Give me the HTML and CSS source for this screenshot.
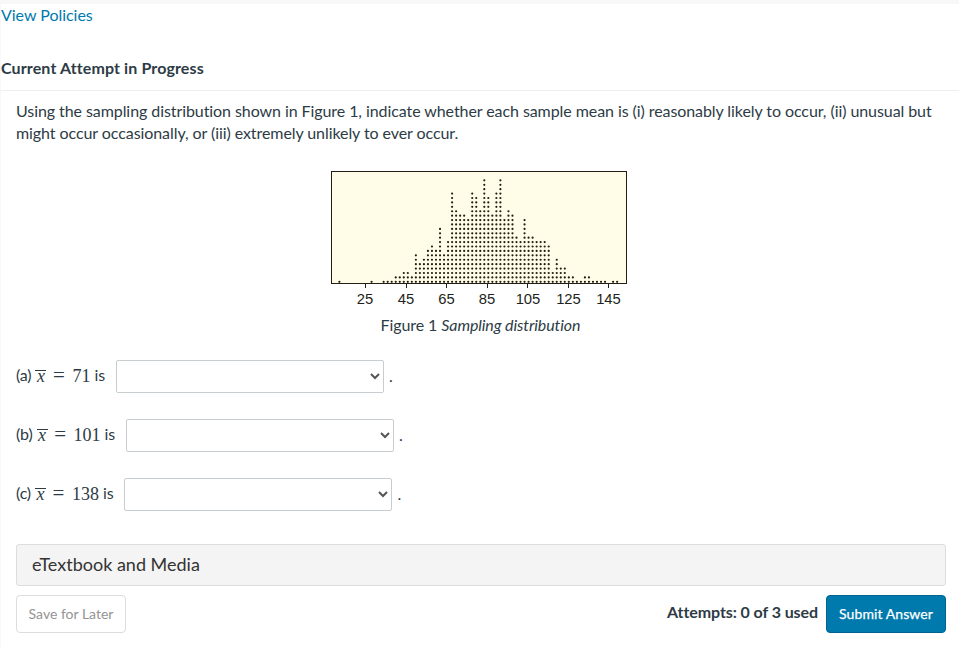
FILE: index.html
```html
<!DOCTYPE html>
<html lang="en">
<head>
<meta charset="utf-8">
<title>Current Attempt in Progress</title>
<link rel="stylesheet" href="styles.css">
</head>
<body>
<main class="page">
  <a class="policies" href="#">View Policies</a>
  <h1 class="heading">Current Attempt in Progress</h1>
  <section class="question">
    <p class="prompt">Using the sampling distribution shown in Figure 1, indicate whether each sample mean is (i) reasonably likely to occur, (ii) unusual but<br>might occur occasionally, or (iii) extremely unlikely to ever occur.</p>
    <figure class="figure">
      <svg class="plot" width="298" height="140" viewBox="330 170 298 140" role="img" aria-label="Sampling distribution dot plot">
        <rect class="frame" x="331.5" y="171.5" width="295" height="112"/>
        <path class="dots" id="dots"/>
        <path class="ticks" d="M365.5 284v4M406.5 284v4M446.5 284v4M487.5 284v4M527.5 284v4M568.5 284v4M608.5 284v4"/>
        <g class="labels">
          <text x="365" y="304">25</text><text x="406" y="304">45</text><text x="446.5" y="304">65</text><text x="487" y="304">85</text><text x="528" y="304">105</text><text x="568.5" y="304">125</text><text x="608.5" y="304">145</text>
        </g>
      </svg>
      <figcaption class="caption">Figure 1 <em>Sampling distribution</em></figcaption>
    </figure>
    <div class="row row-a"><span class="part">(a)</span><span class="math"><i class="mean">x</i><span class="eq">=</span>71</span><span class="is">is</span><select class="choice" aria-label="Answer a"><option></option></select><span class="dot">.</span></div>
    <div class="row row-b"><span class="part">(b)</span><span class="math"><i class="mean">x</i><span class="eq">=</span>101</span><span class="is">is</span><select class="choice" aria-label="Answer b"><option></option></select><span class="dot">.</span></div>
    <div class="row row-c"><span class="part">(c)</span><span class="math"><i class="mean">x</i><span class="eq">=</span>138</span><span class="is">is</span><select class="choice" aria-label="Answer c"><option></option></select><span class="dot">.</span></div>
    <div class="media">eTextbook and Media</div>
    <div class="actions">
      <button class="btn save">Save for Later</button>
      <span class="attempts">Attempts: 0 of 3 used</span>
      <button class="btn submit">Submit Answer</button>
    </div>
  </section>
</main>
<script src="script.js"></script>
</body>
</html>
```
FILE: styles.css
```css
* { box-sizing: border-box; }
body {
  margin: 0;
  font: 16px/22px Lato, "Liberation Sans", sans-serif;
  font-variant-ligatures: none;
  color: #2d3b45;
  background: #fff;
}
.page {
  height: 649px;
  overflow: hidden;
  border-top: 4px solid #f8f8f8;
  border-left: 1px solid #f8f8f8;
}
.policies {
  display: block;
  height: 22px;
  letter-spacing: -0.03px;
  color: #0079ad;
  text-decoration: none;
}
.heading {
  margin: 31px 0 0;
  height: 34px;
  font-size: 16px;
  line-height: 22px;
  font-weight: 700;
  letter-spacing: 0.12px;
  border-bottom: 1px solid #eee;
}
.question { padding: 9px 13px 0 15px; }
.prompt { margin: 0; white-space: nowrap; letter-spacing: -0.075px; }
.figure { margin: 26px 0 0; }
.plot { display: block; margin-left: 314px; }
.frame { fill: #fffde8; stroke: #231f14; }
.dots { fill: none; stroke: #231f14; stroke-width: 2.2; stroke-linecap: round; stroke-dasharray: 0 4.41; }
.ticks { stroke: #231f14; }
.labels { font: 14.8px "Liberation Sans", sans-serif; fill: #231f20; text-anchor: middle; }
.caption { width: 929px; margin-top: 4px; text-align: center; letter-spacing: -0.09px; }
.row { display: flex; align-items: center; height: 33px; margin-bottom: 26px; white-space: nowrap; }
.row-a { margin-top: 24px; }
.row-c { margin-bottom: 33px; }
.part, .is { padding-bottom: 3px; letter-spacing: -0.15px; }
.math { margin-left: 4px; padding-bottom: 2px; font: 18px/22px "Liberation Serif", serif; }
.mean {
  display: inline-block;
  width: 11px;
  height: 12px;
  line-height: 10px;
  border-top: 1px solid currentColor;
  text-align: center;
}
.eq { display: inline-block; margin: 0 7px 0 6px; width: 13px; font-size: 21px; line-height: 18px; text-align: center; }
.is { margin-left: 4px; }
.choice {
  width: 268px;
  height: 33px;
  margin-left: 11px;
  padding-right: 1px;
  border: 1px solid #c7cdd1;
  border-radius: 2px;
  background: #fff;
  color: #555;
}
.dot { margin-left: 5px; padding-bottom: 1px; }
.media {
  width: 930px;
  height: 42px;
  padding-left: 15px;
  border: 1px solid #ddd;
  border-radius: 3px;
  background: #f4f4f4;
  font-size: 18px;
  line-height: 38px;
  color: #333;
}
.actions { display: flex; width: 930px; margin-top: 9px; }
.btn {
  height: 38px;
  padding: 0;
  border: 1px solid #ddd;
  border-radius: 4px;
  font: 14px/36px Lato, sans-serif;
  font-variant-ligatures: none;
  white-space: nowrap;
}
.save { width: 110px; background: #fff; color: #949494; }
.attempts { margin-left: auto; margin-right: 8px; line-height: 34px; font-weight: 700; letter-spacing: -0.08px; }
.submit { width: 120px; border-color: #00648f; background: #0079ad; color: #fff; letter-spacing: 0.08px; -webkit-text-stroke: 0.25px #fff; }
```
FILE: script.js
```js
// Number of dots stacked in each column, left to right.
const counts = [
  1, 0, 0, 0, 0, 0, 0, 0, 1, 0, 0, 1, 1, 1, 2, 2, 3, 3, 2, 7,
  5, 6, 8, 9, 8, 13, 7, 10, 21, 17, 16, 16, 15, 21, 20, 17, 24, 20, 16, 21,
  24, 15, 17, 16, 11, 10, 15, 11, 11, 10, 10, 10, 9, 3, 6, 4, 4, 2, 2, 1,
  1, 2, 2, 1, 1, 1, 1, 0, 1, 1
];
const d = counts.map((n, i) => n
  ? `M${(339.4 + i * 4.025).toFixed(2)} 281.8v-${((n - 1) * 4.41 + 0.1).toFixed(2)}`
  : "").join("");
document.getElementById("dots").setAttribute("d", d);
```
